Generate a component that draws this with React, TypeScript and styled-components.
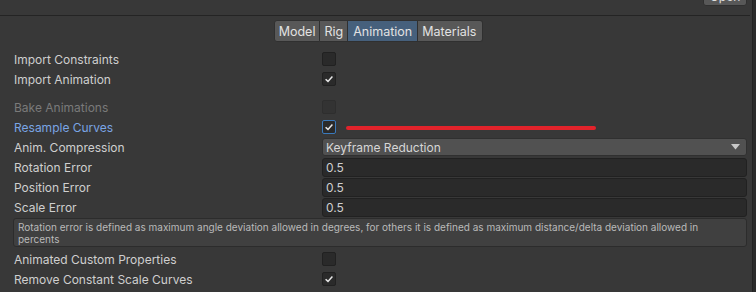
import React from "react";
import styled, { createGlobalStyle } from "styled-components";

const GlobalStyle = createGlobalStyle`
  html, body {
    margin: 0;
    padding: 0;
    background: #383838;
  }
  * {
    box-sizing: border-box;
  }
`;

const Window = styled.div`
  width: 756px;
  height: 292px;
  overflow: hidden;
  display: flex;
  background: #383838;
  font-family: Inter, "Noto Sans", sans-serif;
  color: #cfcfcf;
`;

const Content = styled.div`
  flex: 1;
  display: flex;
  flex-direction: column;
`;

const Scrollbar = styled.div`
  width: 4px;
  margin-left: 2px;
  background: #2b2b2b;
  border-left: 1px solid #232323;
`;

const HeaderBar = styled.div`
  height: 16px;
  display: flex;
  justify-content: flex-end;
  align-items: flex-end;
  padding-right: 3px;
  border-bottom: 1px solid #242424;
  overflow: hidden;
`;

const OpenButton = styled.div`
  width: 44px;
  height: 22px;
  margin-bottom: 9px;
  background: #585858;
  border: 1px solid #303030;
  border-radius: 3px;
  font-size: 12px;
  color: #e0e0e0;
  display: flex;
  align-items: flex-end;
  justify-content: center;
  padding-bottom: 1px;
`;

const TabBar = styled.div`
  display: flex;
  justify-content: center;
  margin-top: 4px;
  margin-left: 7px;
`;

const Tab = styled.div<{ $active?: boolean }>`
  height: 22px;
  padding: 0 ${(p) => (p.$active ? 5 : 4)}px;
  display: flex;
  align-items: center;
  font-size: 12.5px;
  color: #e2e2e2;
  background: ${(p) => (p.$active ? "#46607c" : "#585858")};
  border: 1px solid #303030;
  border-left-width: 0;
  &:first-child {
    border-left-width: 1px;
    border-radius: 3px 0 0 3px;
  }
  &:last-child {
    padding-right: 6px;
    border-radius: 0 3px 3px 0;
  }
`;

const Fields = styled.div`
  margin-top: 7px;
  padding: 0 3px 0 13px;
  display: flex;
  flex-direction: column;
`;

const Row = styled.div<{ $gapAbove?: boolean }>`
  height: 20px;
  display: grid;
  grid-template-columns: 309px 1fr;
  align-items: center;
  margin-top: ${(p) => (p.$gapAbove ? 8 : 0)}px;
`;

const Label = styled.div<{ $tone?: "normal" | "disabled" | "focus" }>`
  font-size: 12px;
  padding-left: 1px;
  white-space: nowrap;
  color: ${(p) =>
    p.$tone === "disabled" ? "#7a7a7a" : p.$tone === "focus" ? "#7aa5e4" : "#cfcfcf"};
`;

const Control = styled.div`
  display: flex;
  align-items: center;
  height: 100%;
`;

const CheckBox = styled.div<{ $focus?: boolean; $disabled?: boolean }>`
  width: 14px;
  height: 14px;
  border-radius: 2px;
  background: ${(p) => (p.$disabled ? "#333333" : "#2a2a2a")};
  border: 1px solid ${(p) => (p.$focus ? "#3a79bb" : p.$disabled ? "#2e2e2e" : "#212121")};
  display: flex;
  align-items: center;
  justify-content: center;
`;

const Marker = styled.div`
  width: 250px;
  height: 4px;
  margin-left: 10px;
  margin-top: 1px;
  border-radius: 2px;
  background: #e2232b;
`;

const Dropdown = styled.div`
  flex: 1;
  height: 18px;
  background: #515151;
  border: 1px solid #303030;
  border-radius: 3px;
  display: flex;
  align-items: center;
  justify-content: space-between;
  padding: 0 6px 0 3px;
  font-size: 12px;
  color: #d6d6d6;
`;

const TextField = styled.div`
  flex: 1;
  height: 19px;
  background: #2a2a2a;
  border: 1px solid #212121;
  border-radius: 3px;
  display: flex;
  align-items: center;
  padding-left: 3px;
  font-size: 12px;
  color: #cfcfcf;
`;

const HelpBox = styled.div`
  margin: 1px 0 2px 0;
  height: 29px;
  background: #404040;
  border: 1px solid #2c2c2c;
  border-radius: 3px;
  padding: 2px 4px 0 4px;
  font-size: 10px;
  line-height: 12px;
  color: #bababa;
`;

const Check = () => (
  <svg width="10" height="10" viewBox="0 0 10 10">
    <path d="M1.6 5.2 L4 7.4 L8.4 2.6" fill="none" stroke="#e8e8e8" strokeWidth="1.5" />
  </svg>
);

const Arrow = () => (
  <svg width="9" height="6" viewBox="0 0 9 6">
    <path d="M0 0 H9 L4.5 5.5 Z" fill="#c8c8c8" />
  </svg>
);

type Item =
  | { kind: "check"; label: string; checked?: boolean; tone?: "normal" | "disabled" | "focus"; gap?: boolean; marker?: boolean }
  | { kind: "dropdown"; label: string; value: string }
  | { kind: "number"; label: string; value: string };

const topItems: Item[] = [
  { kind: "check", label: "Import Constraints" },
  { kind: "check", label: "Import Animation", checked: true },
  { kind: "check", label: "Bake Animations", tone: "disabled", gap: true },
  { kind: "check", label: "Resample Curves", checked: true, tone: "focus", marker: true },
  { kind: "dropdown", label: "Anim. Compression", value: "Keyframe Reduction" },
  { kind: "number", label: "Rotation Error", value: "0.5" },
  { kind: "number", label: "Position Error", value: "0.5" },
  { kind: "number", label: "Scale Error", value: "0.5" },
];

const bottomItems: Item[] = [
  { kind: "check", label: "Animated Custom Properties" },
  { kind: "check", label: "Remove Constant Scale Curves", checked: true },
];

const renderItem = (item: Item) => (
  <Row key={item.label} $gapAbove={item.kind === "check" && item.gap}>
    <Label $tone={item.kind === "check" ? item.tone : "normal"}>{item.label}</Label>
    <Control>
      {item.kind === "check" && (
        <>
          <CheckBox $focus={item.tone === "focus"} $disabled={item.tone === "disabled"}>
            {item.checked && <Check />}
          </CheckBox>
          {item.marker && <Marker />}
        </>
      )}
      {item.kind === "dropdown" && (
        <Dropdown>
          <span>{item.value}</span>
          <Arrow />
        </Dropdown>
      )}
      {item.kind === "number" && <TextField>{item.value}</TextField>}
    </Control>
  </Row>
);

export default function App() {
  return (
    <>
      <GlobalStyle />
      <Window>
        <Content>
          <HeaderBar>
            <OpenButton>Open</OpenButton>
          </HeaderBar>
          <TabBar>
            <Tab>Model</Tab>
            <Tab>Rig</Tab>
            <Tab $active>Animation</Tab>
            <Tab>Materials</Tab>
          </TabBar>
          <Fields>
            {topItems.map(renderItem)}
            <HelpBox>
              Rotation error is defined as maximum angle deviation allowed in degrees, for others it is
              defined as maximum distance/delta deviation allowed in percents
            </HelpBox>
            {bottomItems.map(renderItem)}
          </Fields>
        </Content>
        <Scrollbar />
      </Window>
    </>
  );
}
